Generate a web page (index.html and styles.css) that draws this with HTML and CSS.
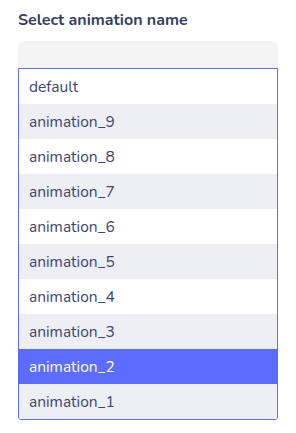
FILE: index.html
```html
<html>
<head>
<title>Select animation</title>
<meta charset='utf-8'/>
<link rel="stylesheet" href="styles.css">
</head>
<body>
<div class='picker'>
<h3>Select animation name</h3>
<div class='search'></div>
<ul class='options'>
<li>default</li>
<li>animation_9</li>
<li>animation_8</li>
<li>animation_7</li>
<li>animation_6</li>
<li>animation_5</li>
<li>animation_4</li>
<li>animation_3</li>
<li class='selected'>animation_2</li>
<li>animation_1</li>
</ul>
</div>
</body>
</html>
```

FILE: styles.css
```css
body {
	margin: 0;
	font-family: "Nunito", "Noto Sans", sans-serif;
	color: #3b4670;
	background: #fff;
}
.picker {
	padding: 10px 18px 0 18px;
	width: 260px;
}
h3 {
	margin: 0 0 11px 0;
	font-size: 16px;
	font-weight: 700;
	line-height: 20px;
	color: #343f66;
}
.search {
	height: 27px;
	background: #f3f3f3;
	border-radius: 8px 8px 0 0;
}
.options {
	list-style: none;
	margin: 0;
	padding: 0;
	border: 1px solid #5b6cff;
	border-radius: 0 0 3px 3px;
	overflow: hidden;
}
.options li {
	height: 35px;
	line-height: 35px;
	padding-left: 10px;
	font-size: 15.5px;
	background: #fff;
}
.options li:nth-child(even) {
	background: #eeeff5;
}
.options li.selected {
	background: #5b6cff;
	color: #fff;
}
```
